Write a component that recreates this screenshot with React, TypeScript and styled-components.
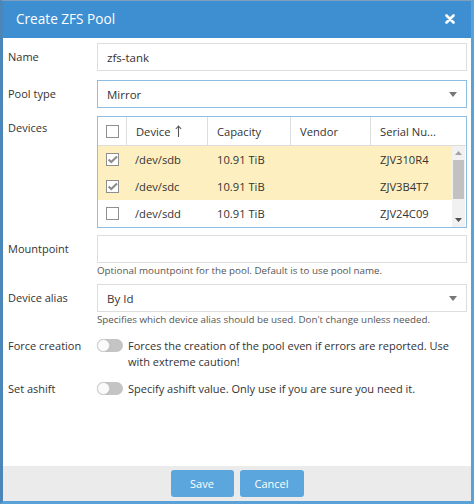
import React from "react";
import styled, { createGlobalStyle } from "styled-components";

const GlobalStyle = createGlobalStyle`
    html, body {
        margin: 0;
        padding: 0;
        background: #ffffff;
    }
    body {
        font-family: "Open Sans", "Noto Sans", sans-serif;
        color: #333333;
    }
    * {
        box-sizing: border-box;
    }
`;

const Frame = styled.div`
    width: 474px;
    height: 504px;
    display: flex;
    flex-direction: column;
    border-top: 1px solid #7f9fbc;
    border-left: 3px solid #4b86b9;
    border-right: 3px solid #5aa1d8;
    border-bottom: 3px solid #5aa1d8;
    background: #ffffff;
`;

const Header = styled.div`
    height: 37px;
    flex-shrink: 0;
    display: flex;
    align-items: center;
    justify-content: space-between;
    padding: 0 16px 2px 13px;
    background: #3d8fd1;
    color: #ffffff;
    font-size: 13.6px;
`;

const CloseButton = styled.button`
    border: none;
    background: none;
    padding: 0;
    display: flex;
    cursor: pointer;
`;

const Body = styled.div`
    flex: 1;
    display: flex;
    flex-direction: column;
    padding: 5px 4px 0 5px;
`;

const Row = styled.div<{ $gap?: number }>`
    display: grid;
    grid-template-columns: 89px 1fr;
    align-items: start;
    margin-bottom: ${(p) => p.$gap ?? 8}px;
`;

const Label = styled.div<{ $top?: number }>`
    font-size: 11px;
    line-height: 16px;
    padding-top: ${(p) => p.$top ?? 6}px;
    color: #333333;
`;

const Field = styled.div`
    display: flex;
    flex-direction: column;
`;

const Input = styled.input`
    height: 28px;
    width: 100%;
    border: 1px solid #dddddd;
    padding: 0 9px;
    font-family: inherit;
    font-size: 11.5px;
    color: #333333;
    outline: none;
`;

const Select = styled.div<{ $focused?: boolean }>`
    height: 28px;
    display: flex;
    align-items: center;
    justify-content: space-between;
    border: 1px solid ${(p) => (p.$focused ? "#8dbde3" : "#dddddd")};
    padding: 0 9px 0 9px;
    font-size: 11.5px;
    color: #333333;
`;

const Help = styled.div`
    font-size: 9.8px;
    line-height: 13px;
    color: #555555;
    padding-top: 1px;
`;

const Table = styled.div`
    border: 1px solid #8dbde3;
    height: 112px;
    display: flex;
    flex-direction: column;
    font-size: 11.2px;
`;

const HeadRow = styled.div`
    display: grid;
    grid-template-columns: 28px 82px 83px 80px 1fr;
    height: 29px;
    border-bottom: 1px solid #dddddd;
    flex-shrink: 0;
`;

const HeadCell = styled.div<{ $first?: boolean; $last?: boolean }>`
    display: flex;
    align-items: center;
    gap: 5px;
    padding-left: 9px;
    border-left: ${(p) => (p.$first ? "1px solid #dddddd" : "none")};
    border-right: ${(p) => (p.$last ? "none" : "1px solid #dddddd")};
    color: #333333;
    white-space: nowrap;
`;

const CheckCell = styled.div`
    display: flex;
    align-items: center;
    justify-content: center;
    padding-left: 1px;
`;

const RowsArea = styled.div`
    flex: 1;
    display: flex;
    overflow: hidden;
`;

const RowsList = styled.div`
    flex: 1;
    display: flex;
    flex-direction: column;
`;

const DataRow = styled.div<{ $selected?: boolean }>`
    display: grid;
    grid-template-columns: 28px 82px 83px 80px 1fr;
    height: 27px;
    align-items: center;
    background: ${(p) => (p.$selected ? "#fdefc0" : "#ffffff")};
`;

const DataCell = styled.div`
    padding-left: 9px;
    color: #333333;
    white-space: nowrap;
`;

const ScrollTrack = styled.div`
    width: 13px;
    margin-right: 1px;
    display: flex;
    flex-direction: column;
    align-items: center;
    background: #f1f1f1;
`;

const ScrollArrow = styled.div`
    height: 14px;
    display: flex;
    align-items: center;
    justify-content: center;
`;

const ScrollThumb = styled.div`
    width: 11px;
    height: 39px;
    background: #c1c1c1;
`;

const ToggleRow = styled.div`
    display: flex;
    align-items: flex-start;
    gap: 5px;
`;

const Toggle = styled.div`
    width: 26px;
    height: 13px;
    flex-shrink: 0;
    border-radius: 7px;
    background: #c4c4c4;
    position: relative;
    margin-top: 1px;
`;

const Knob = styled.div`
    position: absolute;
    left: 0;
    top: 0;
    width: 13px;
    height: 13px;
    border-radius: 50%;
    background: #fafafa;
    border: 1px solid #d4d4d4;
    box-shadow: 0 0 1px rgba(0, 0, 0, 0.2);
`;

const ToggleText = styled.div`
    font-size: 11px;
    line-height: 16px;
    color: #333333;
`;

const Spacer = styled.div`
    flex: 1;
`;

const Footer = styled.div`
    height: 35px;
    flex-shrink: 0;
    display: flex;
    align-items: center;
    justify-content: center;
    gap: 6px;
    background: #ebebeb;
    padding-bottom: 1px;
`;

const Button = styled.button<{ $width: number }>`
    width: ${(p) => p.$width}px;
    height: 27px;
    border: none;
    border-radius: 3px;
    background: #5ba6dd;
    color: #ffffff;
    font-family: inherit;
    font-size: 11px;
    cursor: pointer;
`;

const Caret = () => (
    <svg width="8" height="5" viewBox="0 0 8 5">
        <path d="M0 0 L8 0 L4 5 Z" fill="#777777" />
    </svg>
);

const Checkbox = ({ checked }: { checked?: boolean }) => (
    <svg width="13" height="13" viewBox="0 0 13 13">
        <rect x="0.5" y="0.5" width="12" height="12" fill="#ffffff" stroke="#8f8f8f" />
        {checked && (
            <path d="M2.6 6.4 L5.3 9 L11 3.4" fill="none" stroke="#8c8c8c" strokeWidth="2.1" />
        )}
    </svg>
);

const SortUp = () => (
    <svg width="7" height="12" viewBox="0 0 7 12">
        <path d="M3.5 1 L3.5 12 M0.8 4 L3.5 1 L6.2 4" fill="none" stroke="#555555" strokeWidth="1.1" />
    </svg>
);

const devices = [
    { name: "/dev/sdb", size: "10.91 TiB", vendor: "", serial: "ZJV310R4", selected: true },
    { name: "/dev/sdc", size: "10.91 TiB", vendor: "", serial: "ZJV3B4T7", selected: true },
    { name: "/dev/sdd", size: "10.91 TiB", vendor: "", serial: "ZJV24C09", selected: false },
];

export default function App() {
    return (
        <>
            <GlobalStyle />
            <Frame>
                <Header>
                    <span>Create ZFS Pool</span>
                    <CloseButton aria-label="Close">
                        <svg width="10" height="10" viewBox="0 0 10 10">
                            <path d="M1.5 1.5 L8.5 8.5 M8.5 1.5 L1.5 8.5" stroke="#ffffff" strokeWidth="2.6" strokeLinecap="round" />
                        </svg>
                    </CloseButton>
                </Header>

                <Body>
                    <Row $gap={9}>
                        <Label>Name</Label>
                        <Input defaultValue="zfs-tank" />
                    </Row>

                    <Row>
                        <Label>Pool type</Label>
                        <Select $focused>
                            <span>Mirror</span>
                            <Caret />
                        </Select>
                    </Row>

                    <Row $gap={7}>
                        <Label $top={4}>Devices</Label>
                        <Table>
                            <HeadRow>
                                <CheckCell>
                                    <Checkbox />
                                </CheckCell>
                                <HeadCell $first>
                                    Device <SortUp />
                                </HeadCell>
                                <HeadCell>Capacity</HeadCell>
                                <HeadCell>Vendor</HeadCell>
                                <HeadCell $last>Serial Nu...</HeadCell>
                            </HeadRow>
                            <RowsArea>
                                <RowsList>
                                    {devices.map((d) => (
                                        <DataRow key={d.name} $selected={d.selected}>
                                            <CheckCell>
                                                <Checkbox checked={d.selected} />
                                            </CheckCell>
                                            <DataCell>{d.name}</DataCell>
                                            <DataCell>{d.size}</DataCell>
                                            <DataCell>{d.vendor}</DataCell>
                                            <DataCell>{d.serial}</DataCell>
                                        </DataRow>
                                    ))}
                                </RowsList>
                                <ScrollTrack>
                                    <ScrollArrow>
                                        <svg width="7" height="4" viewBox="0 0 7 4">
                                            <path d="M0 4 L7 4 L3.5 0 Z" fill="#a3a3a3" />
                                        </svg>
                                    </ScrollArrow>
                                    <ScrollThumb />
                                    <Spacer />
                                    <ScrollArrow>
                                        <svg width="7" height="4" viewBox="0 0 7 4">
                                            <path d="M0 0 L7 0 L3.5 4 Z" fill="#505050" />
                                        </svg>
                                    </ScrollArrow>
                                </ScrollTrack>
                            </RowsArea>
                        </Table>
                    </Row>

                    <Row $gap={7}>
                        <Label>Mountpoint</Label>
                        <Field>
                            <Input />
                            <Help>Optional mountpoint for the pool. Default is to use pool name.</Help>
                        </Field>
                    </Row>

                    <Row $gap={12}>
                        <Label>Device alias</Label>
                        <Field>
                            <Select>
                                <span>By Id</span>
                                <Caret />
                            </Select>
                            <Help>Specifies which device alias should be used. Don't change unless needed.</Help>
                        </Field>
                    </Row>

                    <Row $gap={11}>
                        <Label $top={0}>Force creation</Label>
                        <ToggleRow>
                            <Toggle>
                                <Knob />
                            </Toggle>
                            <ToggleText>
                                Forces the creation of the pool even if errors are reported. Use with extreme caution!
                            </ToggleText>
                        </ToggleRow>
                    </Row>

                    <Row>
                        <Label $top={0}>Set ashift</Label>
                        <ToggleRow>
                            <Toggle>
                                <Knob />
                            </Toggle>
                            <ToggleText>Specify ashift value. Only use if you are sure you need it.</ToggleText>
                        </ToggleRow>
                    </Row>
                </Body>

                <Footer>
                    <Button $width={63}>Save</Button>
                    <Button $width={64}>Cancel</Button>
                </Footer>
            </Frame>
        </>
    );
}
